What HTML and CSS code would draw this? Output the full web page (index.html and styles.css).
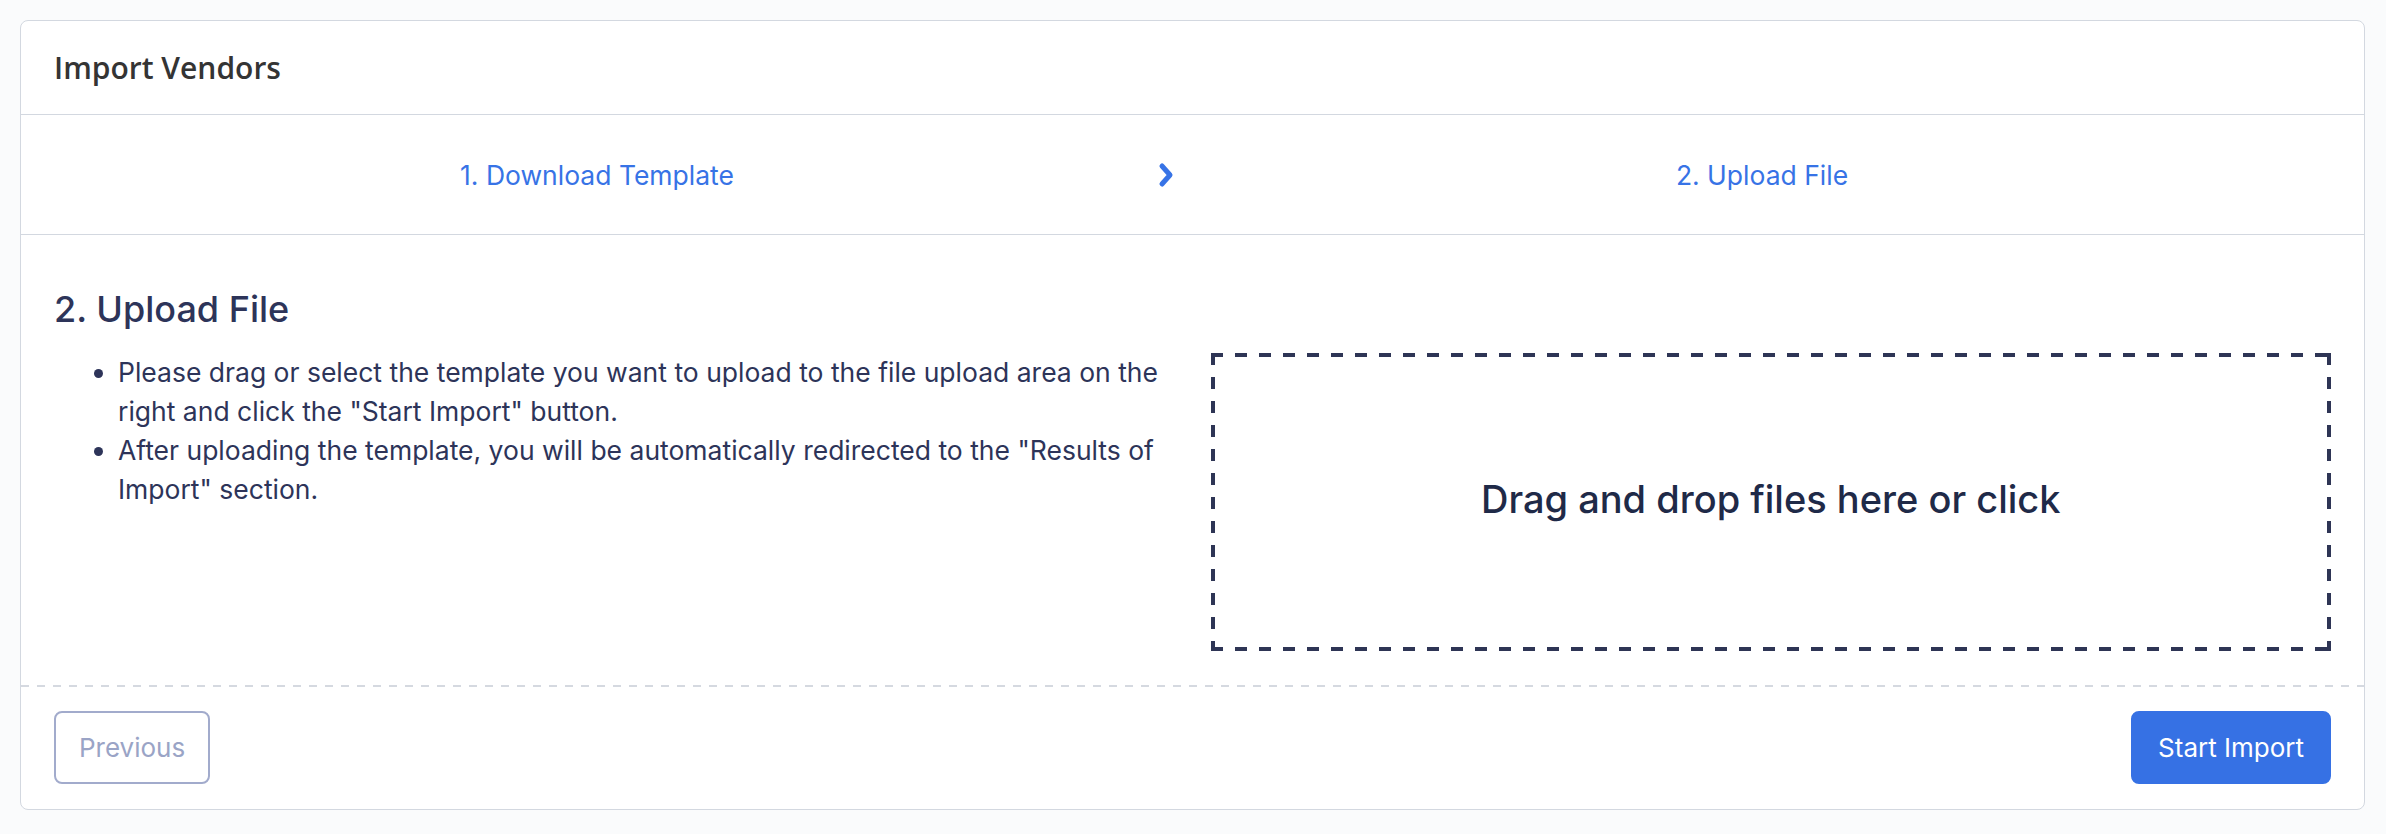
FILE: index.html
```html
<!DOCTYPE html>
<html lang="en">
<head>
<meta charset="utf-8">
<title>Import Vendors</title>
<link rel="stylesheet" href="styles.css">
</head>
<body>
<div class="card">
  <div class="card-header">
    <h1 class="title">Import Vendors</h1>
  </div>
  <div class="steps">
    <div class="step">1. Download Template</div>
    <svg class="sep" width="16" height="26" viewBox="0 0 16 26" aria-hidden="true">
      <polyline points="4,4 12,13 4,22" fill="none" stroke="#3773e6" stroke-width="5" stroke-linecap="round" stroke-linejoin="round"/>
    </svg>
    <div class="step">2. Upload File</div>
  </div>
  <div class="card-body">
    <h2 class="section-title">2. Upload File</h2>
    <div class="row">
      <div class="col">
        <ul class="notes">
          <li>Please drag or select the template you want to upload to the file upload area on the right and click the "Start Import" button.</li>
          <li>After uploading the template, you will be automatically redirected to the "Results of Import" section.</li>
        </ul>
      </div>
      <div class="col">
        <div class="dropzone">
          <span class="dropzone-text">Drag and drop files here or click</span>
        </div>
      </div>
    </div>
  </div>
  <div class="card-footer">
    <button class="btn btn-outline" type="button">Previous</button>
    <button class="btn btn-primary" type="button">Start Import</button>
  </div>
</div>
</body>
</html>
```

FILE: styles.css
```css
* {
  box-sizing: border-box;
}

html, body {
  margin: 0;
}

body {
  background: #fafbfc;
  padding: 20px 21px 26px 20px;
  font-family: Inter, "Noto Sans", sans-serif;
  color: #2d3459;
}

.card {
  background: #ffffff;
  border: 1px solid #d3d8e0;
  border-radius: 8px;
}

.card-header {
  height: 94px;
  display: flex;
  align-items: center;
  padding: 0 33px;
  border-bottom: 1px solid #d3d8e0;
}

.title {
  margin: 0;
  font-family: "Open Sans", sans-serif;
  font-weight: 600;
  font-size: 30px;
  color: #343434;
}

.steps {
  height: 120px;
  display: grid;
  grid-template-columns: 1122fr 16px 1176fr;
  align-items: center;
  padding: 0 14px 0 15px;
  border-bottom: 1px solid #d3d8e0;
}

.step {
  text-align: center;
  font-size: 26.5px;
  color: #3773e6;
}

.sep {
  display: block;
}

.card-body {
  padding: 53px 33px 34px;
}

.section-title {
  margin: 0 0 22px;
  font-size: 36px;
  line-height: 1.2;
  font-weight: 500;
  color: #2d3459;
}

.row {
  display: grid;
  grid-template-columns: 1fr 1fr;
  column-gap: 36px;
}

.notes {
  margin: 0;
  padding-left: 64px;
  font-size: 26.5px;
  line-height: 39px;
  color: #2d3459;
}

.dropzone {
  height: 298px;
  display: flex;
  align-items: center;
  justify-content: center;
  padding-bottom: 6px;
  background:
    repeating-linear-gradient(to right, #2e3555 0 12px, transparent 12px 24px) left top / 100% 4px no-repeat,
    repeating-linear-gradient(to right, #2e3555 0 12px, transparent 12px 24px) left bottom / 100% 4px no-repeat,
    repeating-linear-gradient(to bottom, #2e3555 0 12px, transparent 12px 24px) left top / 4px 100% no-repeat,
    repeating-linear-gradient(to bottom, #2e3555 0 12px, transparent 12px 24px) right top / 4px 100% no-repeat;
}

.dropzone-text {
  font-size: 38px;
  font-weight: 500;
  color: #1f2a48;
}

.card-footer {
  display: flex;
  justify-content: space-between;
  align-items: center;
  padding: 26px 33px 25px;
  background-image: repeating-linear-gradient(to right, #d5d9e0 0 8px, transparent 8px 16px);
  background-size: 100% 2px;
  background-repeat: no-repeat;
  background-position: left top;
}

.btn {
  height: 73px;
  border-radius: 8px;
  font-family: Inter, sans-serif;
  font-size: 26px;
  font-weight: 400;
  cursor: pointer;
}

.btn-outline {
  padding: 0 23px;
  background: #ffffff;
  border: 2px solid #a2abcc;
  color: #9aa4c6;
}

.btn-primary {
  padding: 0 25px;
  background: #3671e4;
  border: 2px solid #3671e4;
  color: #ffffff;
}
```
